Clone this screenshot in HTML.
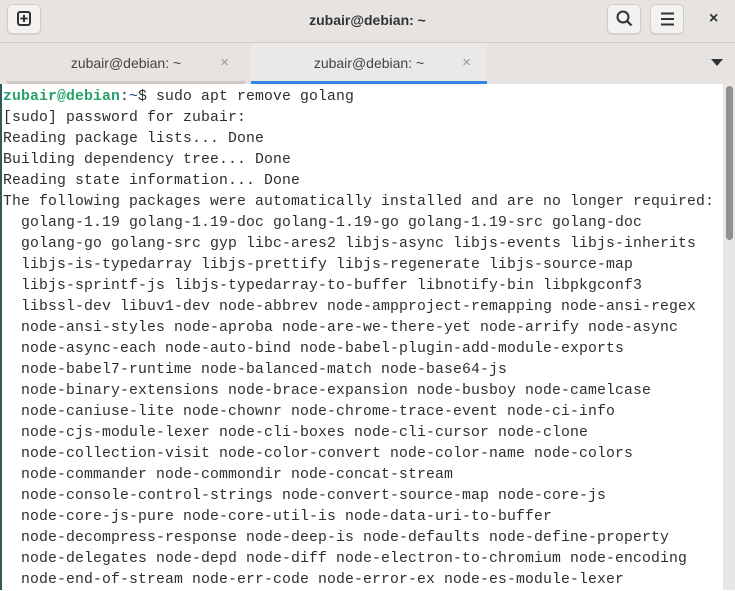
<!DOCTYPE html>
<html><head><meta charset="utf-8"><style>
html,body{margin:0;padding:0;width:735px;height:590px;overflow:hidden;background:#fff;font-family:"Liberation Sans",sans-serif}
#hdr{position:absolute;left:0;top:0;width:735px;height:42px;background:#e6e3e0;border-bottom:1px solid #cfcbc7}
.btn{position:absolute;top:4px;width:34px;height:30px;border-radius:5px;background:#f3f2f1;border:1px solid #d0ccc8;box-sizing:border-box;box-shadow:0 1px 1px rgba(0,0,0,.08)}
#title{position:absolute;left:0;width:735px;top:12px;text-align:center;font-weight:bold;font-size:14px;color:#2e3436}
#tabs{position:absolute;left:0;top:43px;width:735px;height:41px;background:#e6e3e0}
.tab{position:absolute;top:0;height:41px;font-size:14px;color:#444;line-height:40px;text-align:center}
.tab .x{position:absolute;right:16px;top:0;color:#999;font-size:15px}
#term{position:absolute;left:2px;top:84px;width:721px;height:506px;background:#fff}
pre{margin:0;padding:3px 0 0 1px;font-family:"Liberation Mono",monospace;font-size:14.8px;letter-spacing:0.12px;line-height:21px;color:#2e2e2e}
.g{color:#26a269;font-weight:bold}.b{color:#12488b;}
#sb{position:absolute;left:723px;top:84px;width:12px;height:506px;background:#e9e7e5}
#th{position:absolute;left:726px;top:86px;width:7px;height:154px;border-radius:4px;background:#909090}
</style></head><body>
<div style="position:absolute;left:0;top:0;width:2px;height:590px;background:#2e5a5a"></div>
<div id="hdr">
<div class="btn" style="left:7px"><svg width="34" height="30" style="position:absolute;left:-1px;top:-1px"><rect x="11" y="8" width="12" height="13" rx="2" fill="none" stroke="#2e3436" stroke-width="2"/><path d="M17 11v7M13.5 14.5h7" stroke="#2e3436" stroke-width="2"/></svg></div>
<div id="title">zubair@debian: ~</div>
<div class="btn" style="left:607px"><svg width="34" height="30" style="position:absolute;left:-1px;top:-1px"><circle cx="16" cy="13" r="5.5" fill="none" stroke="#2e3436" stroke-width="2"/><path d="M20 17l4.5 4.5" stroke="#2e3436" stroke-width="2.2"/></svg></div>
<div class="btn" style="left:650px"><svg width="34" height="30" style="position:absolute;left:-1px;top:-1px"><path d="M11 9.5h13M11 15h13M11 20.5h13" stroke="#2e3436" stroke-width="2"/></svg></div>
<div style="position:absolute;left:709px;top:10px;font-size:16px;font-weight:bold;color:#2e3436">×</div>
</div>
<div id="tabs">
<div class="tab" style="left:7px;width:238px;background:#e6e3e0;border-bottom:3px solid #cdc8c3;box-sizing:border-box">zubair@debian: ~<span class="x">×</span></div>
<div class="tab" style="left:251px;width:236px;background:#ebe9e7;border-bottom:3px solid #3584e4;box-sizing:border-box">zubair@debian: ~<span class="x">×</span></div>
<div style="position:absolute;left:711px;top:16px;width:0;height:0;border-left:6px solid transparent;border-right:6px solid transparent;border-top:7px solid #2e3436"></div>
</div>
<div id="term"><pre><span class="g">zubair@debian</span>:<span class="b">~</span>$ sudo apt remove golang
[sudo] password for zubair:
Reading package lists... Done
Building dependency tree... Done
Reading state information... Done
The following packages were automatically installed and are no longer required:
  golang-1.19 golang-1.19-doc golang-1.19-go golang-1.19-src golang-doc
  golang-go golang-src gyp libc-ares2 libjs-async libjs-events libjs-inherits
  libjs-is-typedarray libjs-prettify libjs-regenerate libjs-source-map
  libjs-sprintf-js libjs-typedarray-to-buffer libnotify-bin libpkgconf3
  libssl-dev libuv1-dev node-abbrev node-ampproject-remapping node-ansi-regex
  node-ansi-styles node-aproba node-are-we-there-yet node-arrify node-async
  node-async-each node-auto-bind node-babel-plugin-add-module-exports
  node-babel7-runtime node-balanced-match node-base64-js
  node-binary-extensions node-brace-expansion node-busboy node-camelcase
  node-caniuse-lite node-chownr node-chrome-trace-event node-ci-info
  node-cjs-module-lexer node-cli-boxes node-cli-cursor node-clone
  node-collection-visit node-color-convert node-color-name node-colors
  node-commander node-commondir node-concat-stream
  node-console-control-strings node-convert-source-map node-core-js
  node-core-js-pure node-core-util-is node-data-uri-to-buffer
  node-decompress-response node-deep-is node-defaults node-define-property
  node-delegates node-depd node-diff node-electron-to-chromium node-encoding
  node-end-of-stream node-err-code node-error-ex node-es-module-lexer</pre></div>
<div id="sb"></div><div id="th"></div>
</body></html>
